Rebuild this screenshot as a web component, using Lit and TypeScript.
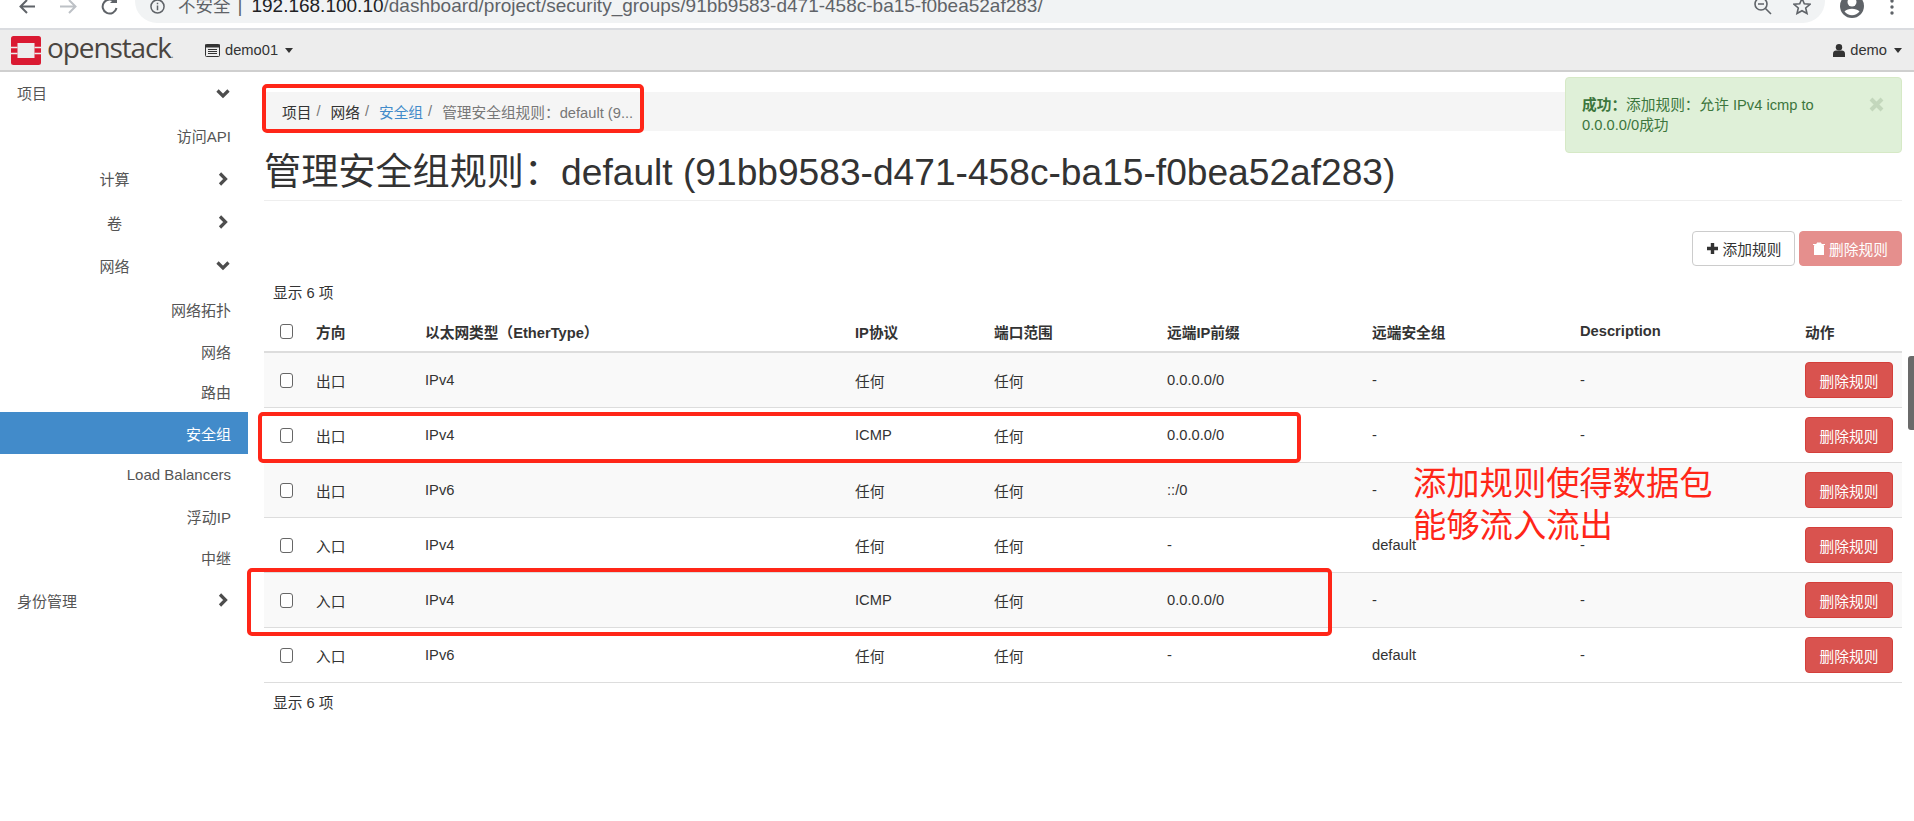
import { LitElement, html, css, svg } from "lit";
import { customElement } from "lit/decorators.js";

const rows = [
  ["出口", "IPv4", "任何", "任何", "0.0.0.0/0", "-", "-"],
  ["出口", "IPv4", "ICMP", "任何", "0.0.0.0/0", "-", "-"],
  ["出口", "IPv6", "任何", "任何", "::/0", "-", "-"],
  ["入口", "IPv4", "任何", "任何", "-", "default", "-"],
  ["入口", "IPv4", "ICMP", "任何", "0.0.0.0/0", "-", "-"],
  ["入口", "IPv6", "任何", "任何", "-", "default", "-"],
];

const chevDown = svg`<svg class="chev" width="14" height="14" viewBox="0 0 14 14"><path d="M1.500 4.500 7 10l5.500-5.500" fill="none" stroke="#4d4d4d" stroke-width="3.200"/></svg>`;
const chevRight = svg`<svg class="chev" width="14" height="14" viewBox="0 0 14 14"><path d="M4 1.500 9.500 7 4 12.500" fill="none" stroke="#4d4d4d" stroke-width="3.200"/></svg>`;

@customElement("app-root")
export class AppRoot extends LitElement {
  static styles = css`
    :host { display: block; position: relative; width: 1914px; height: 821px; overflow: hidden; background: #fff; font-family: "Liberation Sans", "Noto Sans CJK SC", sans-serif; font-size: 14.7px; color: #333; }
    .chrome { height: 28px; display: flex; align-items: flex-start; background: #fff; overflow: hidden; }
    .navs { display: flex; width: 135px; flex: none; height: 23px; }
    .omni { flex: none; width: 1690px; height: 23px; background: #f1f3f4; border-radius: 0 0 22px 22px; display: flex; align-items: center; font-size: 19px; color: #5f6368; overflow: hidden; }
    .omni .u { display: flex; align-items: center; margin-top: -11px; white-space: nowrap; line-height: 20px; }
    .omni .sec { margin-left: 13px; font-size: 17.5px; }
    .omni .bar { margin: 0 9px 0 7px; }
    .omni .host { color: #202124; }
    .omni .spacer { flex: 1; }
    .oi { flex: none; margin-top: -11px; }
    .oi-info { margin-left: 15px; }
    .oi-zoom { margin-right: 21px; }
    .oi-star { margin-right: 14px; }
    .rt { display: flex; flex: 1; }
    .topbar { height: 40px; border-top: 2px solid #dadce0; border-bottom: 2px solid #cfcfcf; background: #ededed; display: flex; align-items: center; padding: 0 12px 0 11px; box-sizing: content-box; }
    .logo { display: flex; align-items: center; width: 194px; flex: none; }
    .wm { font-family: "Open Sans", "Liberation Sans", sans-serif; font-size: 28px; font-weight: 500; letter-spacing: -1.100px; color: #4a4540; margin-left: 6px; line-height: 30px; }
    .wm small { font-size: 10px; letter-spacing: 0; color: #777; }
    .proj { display: flex; align-items: center; gap: 5px; }
    .caret { width: 0; height: 0; border-left: 4.5px solid transparent; border-right: 4.5px solid transparent; border-top: 5px solid #333; margin-left: 2px; }
    .user { margin-left: auto; display: flex; align-items: center; gap: 5px; }
    .body { display: flex; }
    aside { width: 248px; flex: none; display: grid; grid-template-rows: 41px 44px 44px 43px 43px 44px 40px 41px 42px 41px 42px 41px 44px; font-size: 15px; align-self: flex-start; }
    .lv { display: flex; align-items: center; box-sizing: border-box; color: #555; }
    .lv1 { padding: 0 18px 0 17px; justify-content: space-between; }
    .lv2 { padding: 0 18px 1px 13px; }
    .lv2 .t { flex: 1; text-align: center; }
    .lv3 { justify-content: flex-end; padding-right: 17px; }
    .lv3.active { background: #428bca; color: #fff; }
    main { flex: 1; padding: 20px 12px 0 16px; min-width: 0; }
    .crumb { height: 38px; padding-bottom: 1px; background: #f5f5f5; display: flex; align-items: center; padding-left: 18px; white-space: nowrap; }
    .crumb .s { color: #777; margin: 0 10px 0 5px; }
    .crumb a { color: #428bca; }
    .crumb .cur { color: #777; }
    h1 { font-size: 37.150px; font-weight: 400; line-height: 40px; margin: 21px 0 0; padding-bottom: 8px; border-bottom: 1px solid #eee; white-space: nowrap; }
    .actions { display: flex; justify-content: flex-end; gap: 4px; margin-top: 30px; }
    .btn { height: 35px; width: 103px; box-sizing: border-box; border-radius: 4px; display: flex; align-items: center; justify-content: center; gap: 4px; }
    .add { background: #fff; border: 1px solid #ccc; }
    .del { background: #e58f8d; border: 1px solid #e58f8d; color: #fff; }
    .count { padding-left: 9px; height: 20px; line-height: 20px; }
    .count.top { margin-top: 17px; }
    .count.bot { margin-top: 10px; }
    table { width: 1638px; border-collapse: collapse; table-layout: fixed; margin-top: 8px; }
    th { font-weight: 700; height: 40px; border-bottom: 2px solid #ddd; text-align: left; padding: 0; }
    td { height: 54px; border-bottom: 1px solid #ddd; padding: 0; box-sizing: content-box; }
    tbody tr:nth-child(odd) td { background: #f9f9f9; }
    .cb { display: block; width: 11px; height: 13px; border: 1px solid #666; border-radius: 3px; background: #fff; margin-left: 16px; }
    .rowdel { width: 88px; height: 36px; background: #d9534f; border: 1px solid #d43f3a; border-radius: 4px; color: #fff; display: flex; align-items: center; justify-content: center; box-sizing: border-box; }
    .mark { position: absolute; border: 4px solid #ff2618; border-radius: 5px; box-sizing: border-box; pointer-events: none; }
    .m1 { left: 262px; top: 84px; width: 382px; height: 49px; }
    .m2 { left: 258px; top: 412px; width: 1043px; height: 51px; }
    .m3 { left: 247px; top: 568px; width: 1085px; height: 68px; }
    .note { position: absolute; left: 1413px; top: 463px; font-size: 33.300px; line-height: 42px; color: #ff2618; white-space: nowrap; }
    .alert { position: absolute; left: 1565px; top: 77px; width: 337px; height: 76px; box-sizing: border-box; background: #dff0d8; border: 1px solid #d6e9c6; border-radius: 4px; padding: 17px 17px 0 16px; color: #3c763d; line-height: 20px; }
    .alert .x { position: absolute; right: 17px; top: 19px; }
    .thumb { position: absolute; left: 1908px; top: 356px; width: 6px; height: 74px; background: #6a6a6a; border-radius: 3px 0 0 3px; }
  `;

  render() {
    return html`
      <div class="chrome">
        <div class="navs">
          <svg width="135" height="23" viewBox="0 0 135 23">
            <path d="M35 6.500H21M27 0l-6.500 6.500L27 13" fill="none" stroke="#5f6368" stroke-width="2"/>
            <path d="M60 6.500h15M69 0l6.500 6.500L69 13" fill="none" stroke="#bdc1c6" stroke-width="2"/>
            <path d="M115 2a7 7 0 1 0 1.500 6" fill="none" stroke="#5f6368" stroke-width="2"/><path d="M117 -4v7h-7z" fill="#5f6368"/>
          </svg>
        </div>
        <div class="omni">
          <svg class="oi oi-info" width="15" height="15" viewBox="0 0 16 16"><circle cx="8" cy="8" r="7" fill="none" stroke="#5f6368" stroke-width="1.600"/><path d="M8 7v5M8 4v1.600" stroke="#5f6368" stroke-width="1.600"/></svg>
          <div class="u"><span class="sec">不安全</span><span class="bar">|</span><span class="host">192.168.100.10</span><span>/dashboard/project/security_groups/91bb9583-d471-458c-ba15-f0bea52af283/</span></div>
          <span class="spacer"></span>
          <svg class="oi oi-zoom" width="18" height="18" viewBox="0 0 18 18"><circle cx="7" cy="7" r="6" fill="none" stroke="#5f6368" stroke-width="1.600"/><path d="M4 7h6M11.500 11.500 17 17" stroke="#5f6368" stroke-width="1.600"/></svg>
          <svg class="oi oi-star" width="18" height="18" viewBox="0 0 18 18"><path d="M9 1.500 11.300 6.700 17 7.300 12.700 11 14 16.500 9 13.700 4 16.500 5.300 11 1 7.300 6.700 6.700z" fill="none" stroke="#5f6368" stroke-width="1.600"/></svg>
        </div>
        <div class="rt">
          <svg width="89" height="23" viewBox="0 0 89 23">
            <circle cx="27" cy="6" r="12" fill="#5f6368"/><circle cx="27" cy="2" r="4.500" fill="#fff"/><path d="M19.500 11.500a9 6 0 0 1 15 0 9.500 9.500 0 0 1-15 0z" fill="#fff"/>
            <circle cx="67" cy="1" r="1.700" fill="#5f6368"/><circle cx="67" cy="7" r="1.700" fill="#5f6368"/><circle cx="67" cy="13" r="1.700" fill="#5f6368"/>
          </svg>
        </div>
      </div>
      <div class="topbar">
        <div class="logo">
          <svg width="30" height="29" viewBox="0 0 30 29">
            <rect width="30" height="29" rx="2.500" fill="#da1a32"/>
            <rect x="6.500" y="7" width="17" height="15" fill="#ededed"/>
            <path d="M0 11.500h6.500M0 17.500h6.500M23.500 11.500H30M23.500 17.500H30" stroke="#ededed" stroke-width="1.300"/>
          </svg>
          <span class="wm">openstack<small>.</small></span>
        </div>
        <div class="proj">
          <svg width="15" height="13" viewBox="0 0 15 13"><rect x=".5" y=".5" width="14" height="12" rx="1" fill="none" stroke="#333"/><path d="M0 2h15" stroke="#333" stroke-width="3"/><path d="M3 5.500h9M3 7.500h9M3 9.500h9" stroke="#333"/></svg>
          <span>demo01</span><span class="caret"></span>
        </div>
        <div class="user">
          <svg width="12" height="13" viewBox="0 0 12 13"><circle cx="6" cy="3.200" r="3.200" fill="#333"/><path d="M0 13V9.500C0 7.500 1.500 6.500 3 6.500h6c1.500 0 3 1 3 3V13z" fill="#333"/></svg>
          <span>demo</span><span class="caret"></span>
        </div>
      </div>
      <div class="body">
        <aside>
          <div class="lv lv1"><span>项目</span>${chevDown}</div>
          <div class="lv lv3">访问API</div>
          <div class="lv lv2"><span class="t">计算</span>${chevRight}</div>
          <div class="lv lv2"><span class="t">卷</span>${chevRight}</div>
          <div class="lv lv2"><span class="t">网络</span>${chevDown}</div>
          <div class="lv lv3">网络拓扑</div>
          <div class="lv lv3">网络</div>
          <div class="lv lv3">路由</div>
          <div class="lv lv3 active">安全组</div>
          <div class="lv lv3">Load Balancers</div>
          <div class="lv lv3">浮动IP</div>
          <div class="lv lv3">中继</div>
          <div class="lv lv1"><span>身份管理</span>${chevRight}</div>
        </aside>
        <main>
          <div class="crumb"><span>项目</span><span class="s">/</span><span>网络</span><span class="s">/</span><a>安全组</a><span class="s">/</span><span class="cur">管理安全组规则：default (9...</span></div>
          <h1>管理安全组规则：default (91bb9583-d471-458c-ba15-f0bea52af283)</h1>
          <div class="actions">
            <div class="btn add"><svg width="13" height="13" viewBox="0 0 13 13"><path d="M6.500 1v11M1 6.500h11" stroke="#333" stroke-width="3.400"/></svg>添加规则</div>
            <div class="btn del"><svg width="12" height="13" viewBox="0 0 12 13"><path d="M0 2.500h12M4 2.500V1h4v1.500M1.500 3.500h9V13h-9z" fill="#fff" stroke="#fff"/></svg>删除规则</div>
          </div>
          <div class="count top">显示 6 项</div>
          <table>
            <colgroup><col style="width:52px"/><col style="width:109px"/><col style="width:430px"/><col style="width:139px"/><col style="width:173px"/><col style="width:205px"/><col style="width:208px"/><col style="width:225px"/><col style="width:97px"/></colgroup>
            <thead><tr><th><span class="cb"></span></th><th>方向</th><th>以太网类型（EtherType）</th><th>IP协议</th><th>端口范围</th><th>远端IP前缀</th><th>远端安全组</th><th>Description</th><th>动作</th></tr></thead>
            <tbody>
              ${rows.map((r) => html`<tr><td><span class="cb"></span></td>${r.map((c) => html`<td>${c}</td>`)}<td><div class="rowdel">删除规则</div></td></tr>`)}
            </tbody>
          </table>
          <div class="count bot">显示 6 项</div>
        </main>
      </div>
      <div class="mark m1"></div>
      <div class="mark m2"></div>
      <div class="mark m3"></div>
      <div class="note">添加规则使得数据包<br/>能够流入流出</div>
      <div class="alert"><b>成功：</b>添加规则：允许 IPv4 icmp to<br/>0.0.0.0/0成功<svg class="x" width="15" height="15" viewBox="0 0 15 15"><path d="M2 2l11 11M13 2 2 13" stroke="#c3d7bc" stroke-width="4"/></svg></div>
      <div class="thumb"></div>
    `;
  }
}
